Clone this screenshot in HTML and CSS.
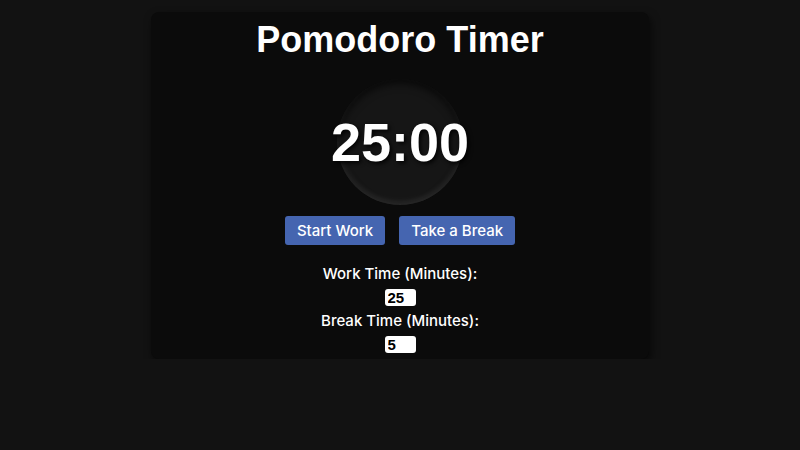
FILE: index.html
```html
<!DOCTYPE html>
<html lang="en">
<head>
    <meta charset="UTF-8">
    <meta name="viewport" content="width=device-width, initial-scale=1.0">
    <title>Pomodoro Timer</title>
    <link rel="stylesheet" href="styles.css">
</head>
<body>

<div class="container">
    <h1 class="title">Pomodoro Timer</h1>
    <div class="clock">
        <span class="time">25:00</span>
    </div>
    <div class="button-wrapper">
        <button class="button start">Start Work</button>
        <button class="button break">Take a Break</button>
    </div>
    <div class="settings">
        <label class="label" for="work">Work Time (Minutes):</label>
        <input class="minutes" id="work" type="text" value="25">
        <label class="label" for="rest">Break Time (Minutes):</label>
        <input class="minutes" id="rest" type="text" value="5">
    </div>
</div>

</body>
</html>
```

FILE: styles.css
```css
* {
    margin: 0;
    padding: 0;
    box-sizing: border-box;
}

body {
    font-family: 'Inter', 'Liberation Sans', sans-serif;
    background-color: #121212;
    color: white;
    display: flex;
    justify-content: center;
    padding-top: 12px;
}

.container {
    width: 498px;
    background-color: #0b0b0b;
    border-radius: 8px;
    box-shadow: 2px 4px 8px rgba(0, 0, 0, 0.6);
    display: flex;
    flex-direction: column;
    align-items: center;
    padding: 8px 0 0;
}

.title {
    font-family: 'Liberation Sans', sans-serif;
    font-weight: bold;
    font-size: 36px;
    line-height: 40px;
}

.clock {
    margin-top: 19px;
    width: 126px;
    height: 126px;
    border-radius: 50%;
    background-color: #161616;
    box-shadow: inset 0 -3px 6px rgba(255, 255, 255, 0.1), inset 0 4px 8px rgba(0, 0, 0, 0.7);
    display: flex;
    align-items: center;
    justify-content: center;
}

.time {
    font-family: 'Liberation Sans', sans-serif;
    font-weight: bold;
    font-size: 54px;
    text-shadow: 2px 2px 4px rgba(0, 0, 0, 0.9);
}

.button-wrapper {
    margin-top: 11px;
    display: flex;
    gap: 14px;
}

.button {
    height: 29px;
    padding: 0 12px;
    border: none;
    border-radius: 3px;
    background-color: #4565b0;
    color: white;
    font-family: 'Inter', sans-serif;
    font-weight: 500;
    font-size: 15px;
    cursor: pointer;
}

.settings {
    margin-top: 20px;
    display: flex;
    flex-direction: column;
    align-items: center;
}

.label {
    font-size: 15px;
    font-weight: 500;
    line-height: 18px;
}

.minutes {
    width: 31px;
    height: 17px;
    margin: 6px 0 6px;
    border: none;
    border-radius: 3px;
    padding-left: 3px;
    font-family: 'Liberation Sans', sans-serif;
    font-weight: bold;
    font-size: 15px;
    color: black;
    background: white;
}
```
